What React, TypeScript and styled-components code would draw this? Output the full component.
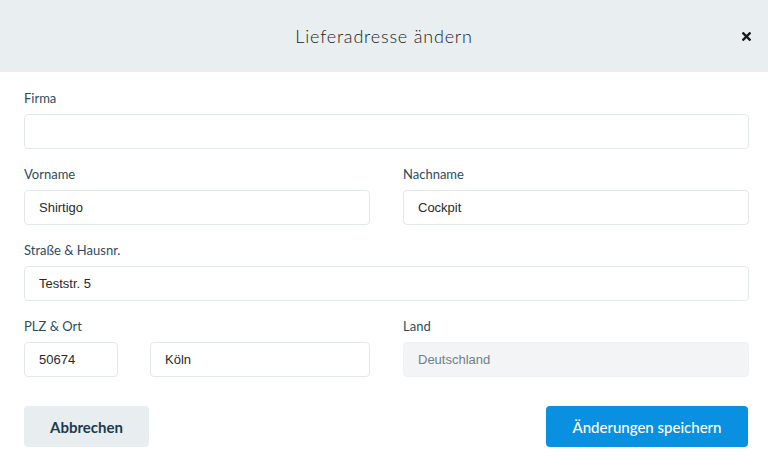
import React, { useState } from 'react';
import styled, { createGlobalStyle } from 'styled-components';

const GlobalStyle = createGlobalStyle`
  html, body {
    margin: 0;
    padding: 0;
    background: #fff;
  }
  body {
    font-family: Lato, "Open Sans", sans-serif;
  }
  * {
    box-sizing: border-box;
  }
`;

type Address = {
  company: string;
  firstName: string;
  lastName: string;
  street: string;
  zip: string;
  city: string;
  country: string;
};

const App: React.FC = () => {
  const [address, setAddress] = useState<Address>({
    company: '',
    firstName: 'Shirtigo',
    lastName: 'Cockpit',
    street: 'Teststr. 5',
    zip: '50674',
    city: 'Köln',
    country: 'Deutschland',
  });

  const update = (key: keyof Address) => (e: React.ChangeEvent<HTMLInputElement>) =>
    setAddress({ ...address, [key]: e.target.value });

  return (
    <Modal>
      <GlobalStyle />
      <Header>
        <Title>Lieferadresse ändern</Title>
        <CloseButton aria-label="Schließen">
          <svg width="9" height="9" viewBox="0 0 10 10">
            <path d="M1.5 1.5 L8.5 8.5 M8.5 1.5 L1.5 8.5" stroke="#1a1a1a" strokeWidth="2.6" strokeLinecap="square" />
          </svg>
        </CloseButton>
      </Header>

      <Body>
        <FormGrid>
          <Field $wide>
            <Label>Firma</Label>
            <Input value={address.company} onChange={update('company')} />
          </Field>

          <Field>
            <Label>Vorname</Label>
            <Input value={address.firstName} onChange={update('firstName')} />
          </Field>
          <Field>
            <Label>Nachname</Label>
            <Input value={address.lastName} onChange={update('lastName')} />
          </Field>

          <Field $wide>
            <Label>Straße &amp; Hausnr.</Label>
            <Input value={address.street} onChange={update('street')} />
          </Field>

          <Field>
            <Label>PLZ &amp; Ort</Label>
            <CityRow>
              <Input value={address.zip} onChange={update('zip')} />
              <Input value={address.city} onChange={update('city')} />
            </CityRow>
          </Field>
          <Field>
            <Label>Land</Label>
            <Input value={address.country} disabled readOnly />
          </Field>
        </FormGrid>

        <Actions>
          <Button $variant="secondary">Abbrechen</Button>
          <Button $variant="primary">Änderungen speichern</Button>
        </Actions>
      </Body>
    </Modal>
  );
};

const Modal = styled.div`
  width: 768px;
  height: 467px;
  background: #fff;
  display: flex;
  flex-direction: column;
`;

const Header = styled.div`
  position: relative;
  height: 72px;
  flex-shrink: 0;
  background: #e9eef0;
  display: flex;
  align-items: center;
  justify-content: center;
`;

const Title = styled.h2`
  margin: 0;
  font-family: Lato, sans-serif;
  font-weight: 300;
  font-size: 18px;
  color: #222;
  letter-spacing: 0.8px;
`;

const CloseButton = styled.button`
  position: absolute;
  right: 15px;
  top: 50%;
  transform: translateY(-50%);
  width: 14px;
  height: 14px;
  padding: 0;
  border: none;
  background: transparent;
  display: flex;
  align-items: center;
  justify-content: center;
  cursor: pointer;
`;

const Body = styled.div`
  padding: 18px 20px 0 24px;
`;

const FormGrid = styled.div`
  display: grid;
  grid-template-columns: 346px 346px;
  column-gap: 33px;
  row-gap: 17px;
`;

const Field = styled.div<{ $wide?: boolean }>`
  display: flex;
  flex-direction: column;
  grid-column: ${(p) => (p.$wide ? '1 / -1' : 'auto')};
`;

const Label = styled.label`
  font-family: Lato, sans-serif;
  font-size: 13px;
  line-height: 16px;
  color: #2f4b5e;
  margin-bottom: 8px;
`;

const Input = styled.input`
  width: 100%;
  height: 35px;
  padding: 0 14px;
  border: 1px solid #e3e8ea;
  border-radius: 4px;
  background: #fff;
  font-family: "Liberation Sans", Arial, sans-serif;
  font-size: 13px;
  color: #2a2a2a;
  outline: none;

  &:disabled {
    background: #f2f4f5;
    border-color: #eef1f2;
    color: #6f808b;
  }
`;

const CityRow = styled.div`
  display: grid;
  grid-template-columns: 94px 1fr;
  column-gap: 32px;
`;

const Actions = styled.div`
  display: flex;
  justify-content: space-between;
  margin-top: 29px;
`;

const Button = styled.button<{ $variant: 'primary' | 'secondary' }>`
  height: 41px;
  border: none;
  border-radius: 4px;
  font-family: Lato, sans-serif;
  font-size: 15px;
  cursor: pointer;
  padding: 0;
  width: ${(p) => (p.$variant === 'primary' ? '202px' : '125px')};
  background: ${(p) => (p.$variant === 'primary' ? '#0990e0' : '#e8eef0')};
  color: ${(p) => (p.$variant === 'primary' ? '#fff' : '#1d3a4e')};
  font-weight: ${(p) => (p.$variant === 'primary' ? 500 : 700)};
`;

export default App;
